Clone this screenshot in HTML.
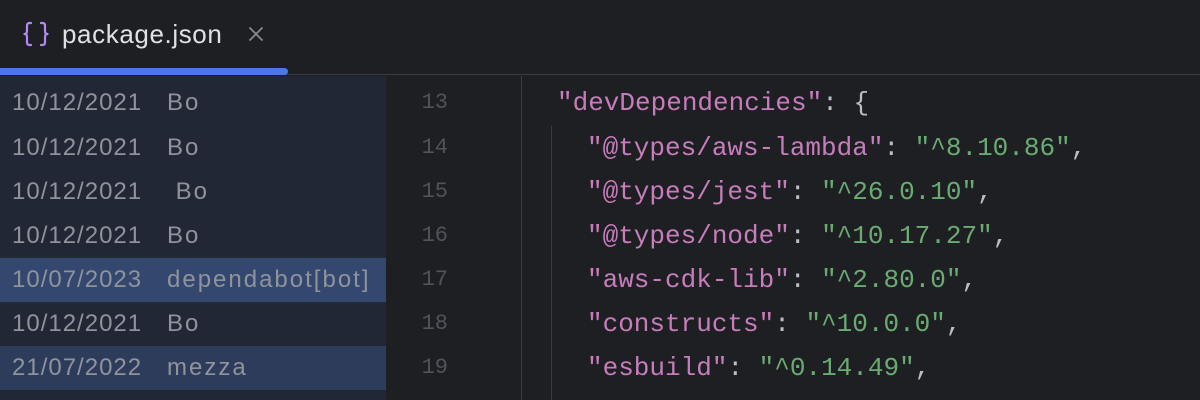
<!DOCTYPE html>
<html><head><meta charset="utf-8"><style>
*{margin:0;padding:0;box-sizing:border-box}
body{width:1200px;height:400px;background:#1e1f22;overflow:hidden;position:relative;font-family:"Liberation Sans",sans-serif}
.tabbar{position:absolute;left:0;top:0;width:1200px;height:75px;background:#1e1f22;border-bottom:1px solid #393b40}
.tt{position:absolute;left:62px;top:18px;font-size:26px;letter-spacing:0.6px;color:#dfe1e5;line-height:32px}
.ul{position:absolute;left:0;top:68px;width:288px;height:7px;background:#4a78e8;border-radius:0 4px 4px 0}
.gut{position:absolute;left:0;top:76px;width:386px;height:324px;background:#222735}
.row{position:absolute;left:0;width:386px;height:44px;font-size:24px;letter-spacing:1px;color:#8f939b;line-height:44px;padding-left:12px;white-space:pre}
.row .a{display:inline-block;width:155px}
.row .n{letter-spacing:2px}
.ln{position:absolute;left:386px;width:62px;text-align:right;font-family:"Liberation Mono",monospace;font-size:22px;color:#4f535b;line-height:44px}
.code{position:absolute;left:557px;font-family:"Liberation Mono",monospace;font-size:26px;line-height:44px;color:#bcbec4;white-space:pre}
.k{color:#c77dbb}.v{color:#6aab73}
.g{position:absolute;width:1px;background:#393b40}
</style></head><body>
<div class="tabbar">
<svg style="position:absolute;left:22px;top:20px" width="28" height="28" viewBox="0 0 28 28" fill="none" stroke="#b189f5" stroke-width="2.2" stroke-linecap="round" stroke-linejoin="round">
<path d="M9 3H7.5Q5 3 5 5.5V11Q5 14 2.5 14Q5 14 5 17V22.5Q5 25 7.5 25H9"/>
<path d="M19 3H20.5Q23 3 23 5.5V11Q23 14 25.5 14Q23 14 23 17V22.5Q23 25 20.5 25H19"/>
</svg>
<div class="tt">package.json</div>
<svg style="position:absolute;left:248px;top:26px" width="16" height="16" viewBox="0 0 16 16" stroke="#868a91" stroke-width="1.8"><path d="M1.5 1.5L14.5 14.5M14.5 1.5L1.5 14.5"/></svg>
</div>
<div class="ul"></div>
<div class="gut"></div>
<div class="row" style="top:81px"><span class="a">10/12/2021</span><span class="n">Bo</span></div>
<div class="row" style="top:126px"><span class="a">10/12/2021</span><span class="n">Bo</span></div>
<div class="row" style="top:170px"><span class="a">10/12/2021</span><span class="n"> Bo</span></div>
<div class="row" style="top:214px"><span class="a">10/12/2021</span><span class="n">Bo</span></div>
<div class="row" style="top:258px;background:#33476f"><span class="a">10/07/2023</span><span class="n">dependabot[bot]</span></div>
<div class="row" style="top:302px"><span class="a">10/12/2021</span><span class="n">Bo</span></div>
<div class="row" style="top:346px;background:#2e3c5c"><span class="a">21/07/2022</span><span class="n">mezza</span></div>
<div class="g" style="left:521px;top:76px;height:324px"></div>
<div class="g" style="left:551px;top:126px;height:274px"></div>
<div class="ln" style="top:81px">13</div>
<div class="ln" style="top:126px">14</div>
<div class="ln" style="top:170px">15</div>
<div class="ln" style="top:214px">16</div>
<div class="ln" style="top:258px">17</div>
<div class="ln" style="top:302px">18</div>
<div class="ln" style="top:346px">19</div>
<div class="code" style="top:81px"><span class="k">"devDependencies"</span>: {</div>
<div class="code" style="top:126px;left:587px"><span class="k">"@types/aws-lambda"</span>: <span class="v">"^8.10.86"</span>,</div>
<div class="code" style="top:170px;left:587px"><span class="k">"@types/jest"</span>: <span class="v">"^26.0.10"</span>,</div>
<div class="code" style="top:214px;left:587px"><span class="k">"@types/node"</span>: <span class="v">"^10.17.27"</span>,</div>
<div class="code" style="top:258px;left:587px"><span class="k">"aws-cdk-lib"</span>: <span class="v">"^2.80.0"</span>,</div>
<div class="code" style="top:302px;left:587px"><span class="k">"constructs"</span>: <span class="v">"^10.0.0"</span>,</div>
<div class="code" style="top:346px;left:587px"><span class="k">"esbuild"</span>: <span class="v">"^0.14.49"</span>,</div>
</body></html>
